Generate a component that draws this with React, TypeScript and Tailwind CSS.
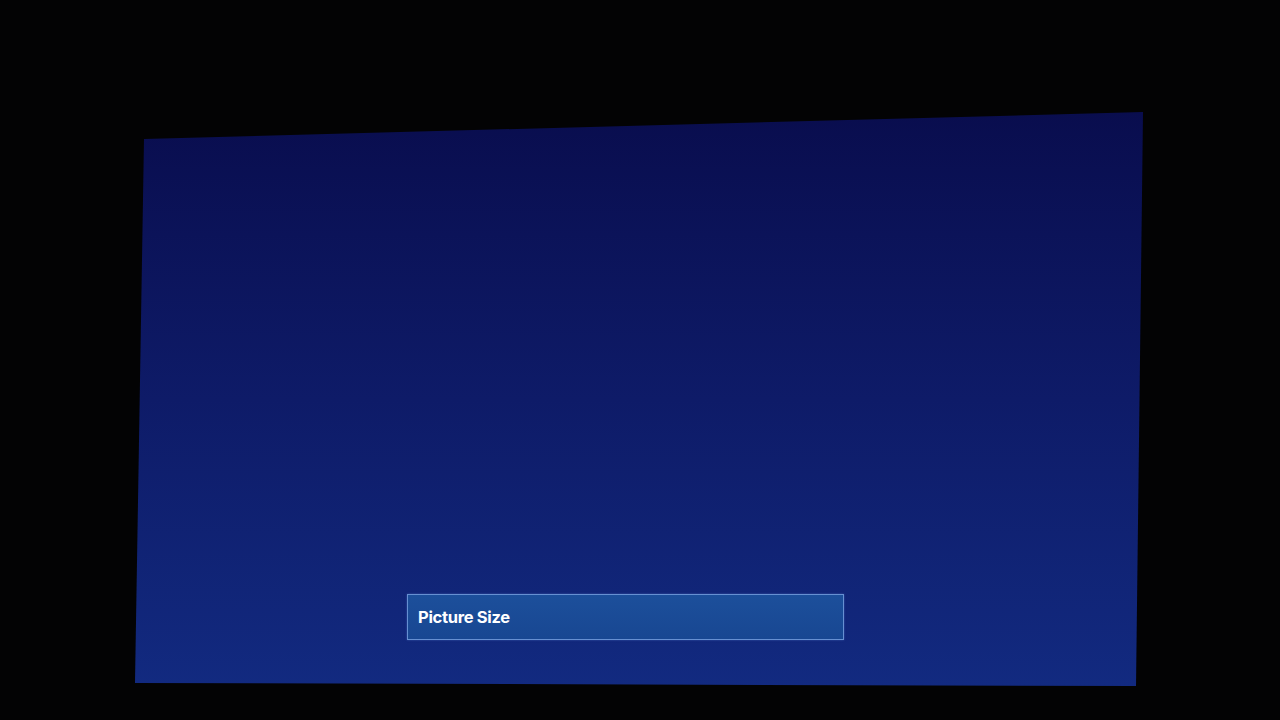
import React from 'react';

export default function App() {
  return (
    <div className="w-[1280px] h-[720px] bg-[#030304] overflow-hidden pt-[112px] pl-[135px]">
      <div className="w-[1008px] h-[574px] flex flex-col justify-end pb-[46px] pl-[272px] bg-gradient-to-b from-[#090d4e] via-[#0e1b68] to-[#122a80] [clip-path:polygon(9px_27px,1008px_0,1001px_574px,0_571px)]">
        <div className="w-[437px] h-[46px] flex items-center px-[10px] bg-gradient-to-b from-[#1c4f9b] to-[#184792] border border-[#6690d2] shadow-[0_0_2px_rgba(90,130,210,0.5)]">
          <span className="text-white text-[16.5px] font-bold tracking-[-0.3px] font-['Inter','Open_Sans',sans-serif]">Picture Size</span>
        </div>
      </div>
    </div>
  );
}
